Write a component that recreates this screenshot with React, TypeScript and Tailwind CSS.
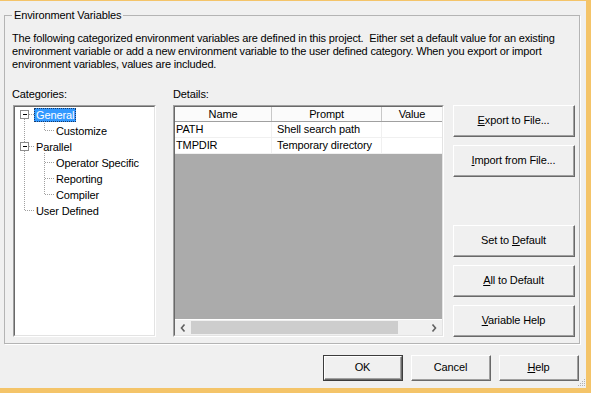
import React from "react";

const font = { fontFamily: '"Liberation Sans", Arial, sans-serif' };

function Btn({ children, w = "w-[122px]", h = "h-[32px]", def = false }: { children: React.ReactNode; w?: string; h?: string; def?: boolean }) {
  return (
    <div className={`${w} ${h} ${def ? "border border-[#3c3c3c]" : ""} flex`}>
      <div className="flex-1 flex border-t border-l border-t-[#ffffff] border-l-[#ffffff] border-b border-r border-b-[#696969] border-r-[#696969]">
        <div className="flex-1 flex items-center justify-center bg-[#f0f0f0] border-b border-r border-b-[#a0a0a0] border-r-[#a0a0a0] text-[11px] leading-[13px] text-black">
          {children}
        </div>
      </div>
    </div>
  );
}

function Sunken({ className, children }: { className: string; children: React.ReactNode }) {
  return (
    <div className={`${className} flex border border-t-[#a0a0a0] border-l-[#a0a0a0] border-b-[#ffffff] border-r-[#ffffff]`}>
      <div className="flex-1 flex flex-col min-w-0 border border-t-[#696969] border-l-[#696969] border-b-[#e3e3e3] border-r-[#e3e3e3] overflow-hidden">
        {children}
      </div>
    </div>
  );
}

function TreeRow({ level, label, selected = false }: { level: number; label: string; selected?: boolean }) {
  return (
    <div className={`h-[16px] flex items-center ${level === 0 ? "pl-[19px]" : "pl-[39px]"}`}>
      {selected ? (
        <span className="h-[14px] px-[1px] flex items-center bg-[#3399ff] text-white border border-dotted border-[#1a3a66]">{label}</span>
      ) : (
        <span className="px-[2px]">{label}</span>
      )}
    </div>
  );
}

export default function App() {
  return (
    <div className="w-[591px] h-[393px] bg-[#f4c469] relative overflow-hidden" style={font}>
      <div className="mt-[1px] w-[586px] h-[387px] bg-[#f0f0f0] flex flex-col text-[11px] leading-[13px] tracking-[-0.12px] text-black relative">
        {/* group box */}
        <div className="mt-[14px] ml-[4px] w-[576px] h-[329px] border border-[#b4b4b4] shadow-[1px_1px_0_#ffffff] relative flex flex-col">
          <div className="absolute left-[7px] top-[-7px] px-[2px] bg-[#f0f0f0] leading-[13px]">Environment Variables</div>
          <div className="pt-[16px] pl-[7px] tracking-[-0.17px]">
            <div className="whitespace-pre">The following categorized environment variables are defined in this project.  Either set a default value for an existing</div>
            <div className="whitespace-pre">environment variable or add a new environment variable to the user defined category. When you export or import</div>
            <div className="whitespace-pre">environment variables, values are included.</div>
          </div>
          <div className="mt-[17px] pl-[7px] flex">
            {/* categories */}
            <div className="w-[144px] flex flex-col">
              <div className="h-[13px]">Categories:</div>
              <Sunken className="mt-[4px] ml-[1px] w-[143px] h-[232px] bg-white">
                <div className="relative flex-1 bg-white">
                  <svg className="absolute left-0 top-0" width="140" height="120" shapeRendering="crispEdges">
                    <g stroke="#a0a0a0" strokeDasharray="1 1" strokeWidth="1">
                      <line x1="9.5" y1="12" x2="9.5" y2="35" />
                      <line x1="9.5" y1="44" x2="9.5" y2="104" />
                      <line x1="14" y1="7.5" x2="19" y2="7.5" />
                      <line x1="14" y1="39.5" x2="19" y2="39.5" />
                      <line x1="10" y1="103.5" x2="19" y2="103.5" />
                      <line x1="29.5" y1="14" x2="29.5" y2="24" />
                      <line x1="30" y1="23.5" x2="39" y2="23.5" />
                      <line x1="29.5" y1="46" x2="29.5" y2="88" />
                      <line x1="30" y1="55.5" x2="39" y2="55.5" />
                      <line x1="30" y1="71.5" x2="39" y2="71.5" />
                      <line x1="30" y1="87.5" x2="39" y2="87.5" />
                    </g>
                    <rect x="5.5" y="3.5" width="8" height="8" fill="#ffffff" stroke="#8c8c8c" />
                    <line x1="7.5" y1="7.5" x2="12" y2="7.5" stroke="#000" />
                    <rect x="5.5" y="35.5" width="8" height="8" fill="#ffffff" stroke="#8c8c8c" />
                    <line x1="7.5" y1="39.5" x2="12" y2="39.5" stroke="#000" />
                  </svg>
                  <div className="relative flex flex-col">
                    <TreeRow level={0} label="General" selected />
                    <TreeRow level={1} label="Customize" />
                    <TreeRow level={0} label="Parallel" />
                    <TreeRow level={1} label="Operator Specific" />
                    <TreeRow level={1} label="Reporting" />
                    <TreeRow level={1} label="Compiler" />
                    <TreeRow level={0} label="User Defined" />
                  </div>
                </div>
              </Sunken>
            </div>
            {/* details */}
            <div className="ml-[17px] w-[271px] flex flex-col">
              <div className="h-[13px]">Details:</div>
              <Sunken className="mt-[4px] w-[271px] h-[232px] bg-[#ababab]">
                <div className="flex h-[15px] bg-[#fbfbfb] border-b border-[#a0a0a0]">
                  <div className="w-[97px] border-r border-[#c8c8c8] flex items-center justify-center">Name</div>
                  <div className="w-[110px] border-r border-[#c8c8c8] flex items-center justify-center">Prompt</div>
                  <div className="flex-1 flex items-center justify-center">Value</div>
                </div>
                <div className="flex h-[16px] bg-white border-b border-[#f0f0f0]">
                  <div className="w-[97px] pl-[1px] border-r border-[#f0f0f0] flex items-center">PATH</div>
                  <div className="w-[110px] pl-[5px] border-r border-[#f0f0f0] flex items-center">Shell search path</div>
                  <div className="flex-1" />
                </div>
                <div className="flex h-[16px] bg-white border-b border-[#f0f0f0]">
                  <div className="w-[97px] pl-[1px] border-r border-[#f0f0f0] flex items-center">TMPDIR</div>
                  <div className="w-[110px] pl-[5px] border-r border-[#f0f0f0] flex items-center">Temporary directory</div>
                  <div className="flex-1" />
                </div>
                <div className="flex-1 bg-[#ababab]" />
                <div className="h-[16px] flex bg-[#f0f0f0] border-t border-[#ffffff]">
                  <div className="w-[16px] flex items-center justify-center">
                    <svg width="6" height="8" viewBox="0 0 6 8"><path d="M4.5 0.5 L1.5 4 L4.5 7.5" fill="none" stroke="#606060" strokeWidth="1.6" /></svg>
                  </div>
                  <div className="w-[207px] my-[1px] bg-[#cdcdcd]" />
                  <div className="flex-1" />
                  <div className="w-[16px] flex items-center justify-center">
                    <svg width="6" height="8" viewBox="0 0 6 8"><path d="M1.5 0.5 L4.5 4 L1.5 7.5" fill="none" stroke="#606060" strokeWidth="1.6" /></svg>
                  </div>
                </div>
              </Sunken>
            </div>
            {/* buttons */}
            <div className="ml-[9px] w-[122px] flex flex-col pt-[17px]">
              <Btn><span><u>E</u>xport to File...</span></Btn>
              <div className="h-[8px]" />
              <Btn><span><u>I</u>mport from File...</span></Btn>
              <div className="h-[48px]" />
              <Btn><span>Set to <u>D</u>efault</span></Btn>
              <div className="h-[8px]" />
              <Btn><span><u>A</u>ll to Default</span></Btn>
              <div className="h-[8px]" />
              <Btn><span><u>V</u>ariable Help</span></Btn>
            </div>
          </div>
        </div>
        {/* bottom buttons */}
        <div className="mt-[11px] flex justify-end gap-[8px] pr-[7px]">
          <Btn w="w-[80px]" h="h-[26px]" def><span>OK</span></Btn>
          <Btn w="w-[80px]" h="h-[26px]"><span>Cancel</span></Btn>
          <Btn w="w-[80px]" h="h-[26px]"><span><u>H</u>elp</span></Btn>
        </div>
        <svg className="absolute right-[0px] bottom-[1px]" width="8" height="8" viewBox="0 0 8 8">
          <g fill="#b0b0b0">
            <rect x="6" y="0" width="1" height="1" />
            <rect x="4" y="2" width="1" height="1" />
            <rect x="6" y="2" width="1" height="1" />
            <rect x="2" y="4" width="1" height="1" />
            <rect x="4" y="4" width="1" height="1" />
            <rect x="6" y="4" width="1" height="1" />
            <rect x="0" y="6" width="1" height="1" />
            <rect x="2" y="6" width="1" height="1" />
            <rect x="4" y="6" width="1" height="1" />
            <rect x="6" y="6" width="1" height="1" />
          </g>
        </svg>
      </div>
    </div>
  );
}
